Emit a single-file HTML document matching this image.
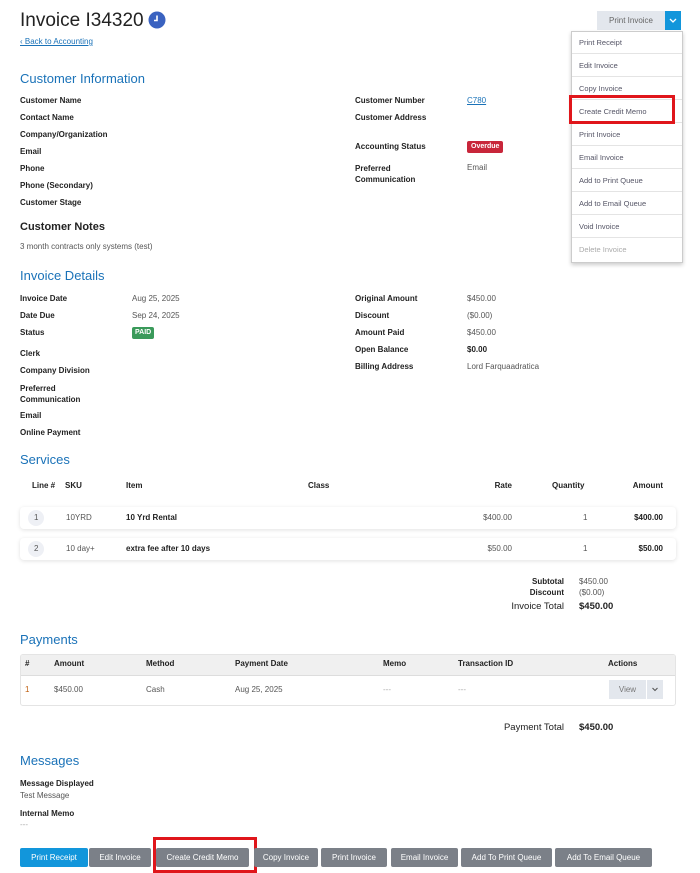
<!DOCTYPE html>
<html><head><style>
*{margin:0;padding:0;box-sizing:border-box}
body{width:700px;height:873px;background:#fff;position:relative;overflow:hidden;font-family:"Liberation Sans",sans-serif;color:#222}
.a{position:absolute;white-space:nowrap;font-size:8px;line-height:10px}
.b{font-weight:bold;color:#222}
.v{color:#555}
.h{position:absolute;font-size:13px;color:#1a72b8;line-height:16px;white-space:nowrap}
.r{text-align:right}
.box{position:absolute;background:#fff;border-radius:4px;box-shadow:0 1px 4px rgba(0,0,0,.12)}
.btn{position:absolute;top:848px;height:19px;background:#7b8088;color:#fff;font-size:8px;line-height:19px;text-align:center;border-radius:2px;white-space:nowrap}
.mi{position:absolute;left:572px;width:110px;height:23px;border-bottom:1px solid #e4e4e4;font-size:7.5px;line-height:23px;padding-left:7px;color:#556}
</style></head><body>
<div class="a" style="left:20px;top:9px;font-size:19px;line-height:24px;color:#222">Invoice I34320</div>
<svg style="position:absolute;left:148px;top:11px" width="18" height="18" viewBox="0 0 18 18"><circle cx="9" cy="9" r="8.5" fill="#3a62c0"/><path d="M9 4.5V9.5H6" stroke="#fff" stroke-width="1.6" fill="none"/></svg>
<div class="a" style="left:20px;top:37px;color:#1a72b8;text-decoration:underline">‹ Back to Accounting</div>

<div style="position:absolute;left:597px;top:11px;width:68px;height:19px;background:#e3e7ed;font-size:8px;line-height:19px;text-align:center;color:#666">Print Invoice</div>
<div style="position:absolute;left:665px;top:11px;width:16px;height:19px;background:#1296db"><svg width="16" height="19"><path d="M5 8l3 3 3-3" stroke="#fff" stroke-width="1.3" fill="none"/></svg></div>
<div style="position:absolute;left:571px;top:31px;width:112px;height:232px;background:#fff;border:1px solid #ccc;box-shadow:0 2px 4px rgba(0,0,0,.2)"></div>
<div class="mi" style="top:31px">Print Receipt</div>
<div class="mi" style="top:54px">Edit Invoice</div>
<div class="mi" style="top:77px">Copy Invoice</div>
<div class="mi" style="top:100px">Create Credit Memo</div>
<div class="mi" style="top:123px">Print Invoice</div>
<div class="mi" style="top:146px">Email Invoice</div>
<div class="mi" style="top:169px">Add to Print Queue</div>
<div class="mi" style="top:192px">Add to Email Queue</div>
<div class="mi" style="top:215px">Void Invoice</div>
<div class="mi" style="top:238px;border:none;color:#aaa">Delete Invoice</div>
<div style="position:absolute;left:569px;top:95px;width:106px;height:29px;border:3px solid #e0161b"></div>

<div class="h" style="left:20px;top:71px">Customer Information</div>
<div class="a b" style="left:20px;top:96px">Customer Name</div>
<div class="a b" style="left:20px;top:113px">Contact Name</div>
<div class="a b" style="left:20px;top:130px">Company/Organization</div>
<div class="a b" style="left:20px;top:147px">Email</div>
<div class="a b" style="left:20px;top:164px">Phone</div>
<div class="a b" style="left:20px;top:181px">Phone (Secondary)</div>
<div class="a b" style="left:20px;top:198px">Customer Stage</div>
<div class="a b" style="left:355px;top:96px">Customer Number</div>
<div class="a" style="left:467px;top:96px;color:#1a72b8;text-decoration:underline">C780</div>
<div class="a b" style="left:355px;top:113px">Customer Address</div>
<div class="a b" style="left:355px;top:142px">Accounting Status</div>
<div class="a" style="left:467px;top:141px;background:#c8263a;color:#fff;font-weight:bold;font-size:7px;padding:1px 4px;border-radius:2px">Overdue</div>
<div class="a b" style="left:355px;top:163px;line-height:11px">Preferred<br>Communication</div>
<div class="a v" style="left:467px;top:163px">Email</div>
<div class="a b" style="left:20px;top:221px;font-size:11px;line-height:13px">Customer Notes</div>
<div class="a v" style="left:20px;top:242px">3 month contracts only systems (test)</div>

<div class="h" style="left:20px;top:268px">Invoice Details</div>
<div class="a b" style="left:20px;top:294px">Invoice Date</div>
<div class="a v" style="left:132px;top:294px">Aug 25, 2025</div>
<div class="a b" style="left:20px;top:311px">Date Due</div>
<div class="a v" style="left:132px;top:311px">Sep 24, 2025</div>
<div class="a b" style="left:20px;top:328px">Status</div>
<div class="a" style="left:132px;top:327px;background:#3a9a5a;color:#fff;font-weight:bold;font-size:7px;padding:1px 3px;border-radius:2px">PAID</div>
<div class="a b" style="left:20px;top:349px">Clerk</div>
<div class="a b" style="left:20px;top:366px">Company Division</div>
<div class="a b" style="left:20px;top:383px;line-height:11px">Preferred<br>Communication</div>
<div class="a b" style="left:20px;top:411px">Email</div>
<div class="a b" style="left:20px;top:428px">Online Payment</div>
<div class="a b" style="left:355px;top:294px">Original Amount</div>
<div class="a v" style="left:467px;top:294px">$450.00</div>
<div class="a b" style="left:355px;top:311px">Discount</div>
<div class="a v" style="left:467px;top:311px">($0.00)</div>
<div class="a b" style="left:355px;top:328px">Amount Paid</div>
<div class="a v" style="left:467px;top:328px">$450.00</div>
<div class="a b" style="left:355px;top:345px">Open Balance</div>
<div class="a b" style="left:467px;top:345px">$0.00</div>
<div class="a b" style="left:355px;top:362px">Billing Address</div>
<div class="a v" style="left:467px;top:362px">Lord Farquaadratica</div>

<div class="h" style="left:20px;top:452px">Services</div>
<div class="a b" style="left:32px;top:481px">Line #</div>
<div class="a b" style="left:65px;top:481px">SKU</div>
<div class="a b" style="left:126px;top:481px">Item</div>
<div class="a b" style="left:308px;top:481px">Class</div>
<div class="a b r" style="left:470px;width:42px;top:481px">Rate</div>
<div class="a b" style="left:552px;top:481px">Quantity</div>
<div class="a b r" style="left:620px;width:43px;top:481px">Amount</div>
<div class="box" style="left:20px;top:507px;width:656px;height:22px"></div>
<div class="box" style="left:20px;top:538px;width:656px;height:22px"></div>
<div style="position:absolute;left:28px;top:510px;width:16px;height:16px;border-radius:8px;background:#eef0f5"></div>
<div style="position:absolute;left:28px;top:541px;width:16px;height:16px;border-radius:8px;background:#eef0f5"></div>
<div class="a v" style="left:34px;top:513px">1</div>
<div class="a v" style="left:66px;top:513px">10YRD</div>
<div class="a b" style="left:126px;top:513px">10 Yrd Rental</div>
<div class="a v r" style="left:460px;width:52px;top:513px">$400.00</div>
<div class="a v" style="left:583px;top:513px">1</div>
<div class="a b r" style="left:610px;width:53px;top:513px">$400.00</div>
<div class="a v" style="left:34px;top:544px">2</div>
<div class="a v" style="left:66px;top:544px">10 day+</div>
<div class="a b" style="left:126px;top:544px">extra fee after 10 days</div>
<div class="a v r" style="left:460px;width:52px;top:544px">$50.00</div>
<div class="a v" style="left:583px;top:544px">1</div>
<div class="a b r" style="left:610px;width:53px;top:544px">$50.00</div>
<div class="a b r" style="left:500px;width:64px;top:577px">Subtotal</div>
<div class="a v" style="left:579px;top:577px">$450.00</div>
<div class="a b r" style="left:500px;width:64px;top:588px">Discount</div>
<div class="a v" style="left:579px;top:588px">($0.00)</div>
<div class="a r" style="left:480px;width:84px;top:601px;font-size:9.5px;line-height:12px">Invoice Total</div>
<div class="a b" style="left:579px;top:601px;font-size:9.5px;line-height:12px">$450.00</div>

<div class="h" style="left:20px;top:632px">Payments</div>
<div style="position:absolute;left:20px;top:654px;width:656px;height:52px;border:1px solid #e4e4e4;border-radius:3px;overflow:hidden"><div style="height:21px;background:#f0f0f0;border-bottom:1px solid #ddd"></div></div>
<div class="a b" style="left:25px;top:659px">#</div>
<div class="a b" style="left:54px;top:659px">Amount</div>
<div class="a b" style="left:146px;top:659px">Method</div>
<div class="a b" style="left:235px;top:659px">Payment Date</div>
<div class="a b" style="left:383px;top:659px">Memo</div>
<div class="a b" style="left:458px;top:659px">Transaction ID</div>
<div class="a b" style="left:608px;top:659px">Actions</div>
<div class="a" style="left:25px;top:685px;color:#c06010">1</div>
<div class="a v" style="left:54px;top:685px">$450.00</div>
<div class="a v" style="left:146px;top:685px">Cash</div>
<div class="a v" style="left:235px;top:685px">Aug 25, 2025</div>
<div class="a" style="left:383px;top:685px;color:#aaa">---</div>
<div class="a" style="left:458px;top:685px;color:#aaa">---</div>
<div style="position:absolute;left:609px;top:680px;width:37px;height:19px;background:#e3e7ed;font-size:8px;line-height:19px;text-align:center;color:#777">View</div>
<div style="position:absolute;left:647px;top:680px;width:16px;height:19px;background:#e3e7ed"><svg width="16" height="19"><path d="M5.5 8l2.5 2.5 2.5-2.5" stroke="#555" stroke-width="1.1" fill="none"/></svg></div>
<div class="a r" style="left:480px;width:84px;top:722px;font-size:9.5px;line-height:12px">Payment Total</div>
<div class="a b" style="left:579px;top:722px;font-size:9.5px;line-height:12px">$450.00</div>

<div class="h" style="left:20px;top:753px">Messages</div>
<div class="a b" style="left:20px;top:779px">Message Displayed</div>
<div class="a v" style="left:20px;top:791px">Test Message</div>
<div class="a b" style="left:20px;top:809px">Internal Memo</div>
<div class="a" style="left:20px;top:820px;color:#aaa">---</div>

<div class="btn" style="left:20px;width:68px;background:#1296db">Print Receipt</div>
<div class="btn" style="left:89px;width:62px">Edit Invoice</div>
<div class="btn" style="left:156px;width:93px">Create Credit Memo</div>
<div style="position:absolute;left:153px;top:837px;width:104px;height:36px;border:3px solid #e0161b"></div>
<div class="btn" style="left:254px;width:64px">Copy Invoice</div>
<div class="btn" style="left:321px;width:66px">Print Invoice</div>
<div class="btn" style="left:391px;width:67px">Email Invoice</div>
<div class="btn" style="left:461px;width:91px">Add To Print Queue</div>
<div class="btn" style="left:555px;width:97px">Add To Email Queue</div>
</body></html>
